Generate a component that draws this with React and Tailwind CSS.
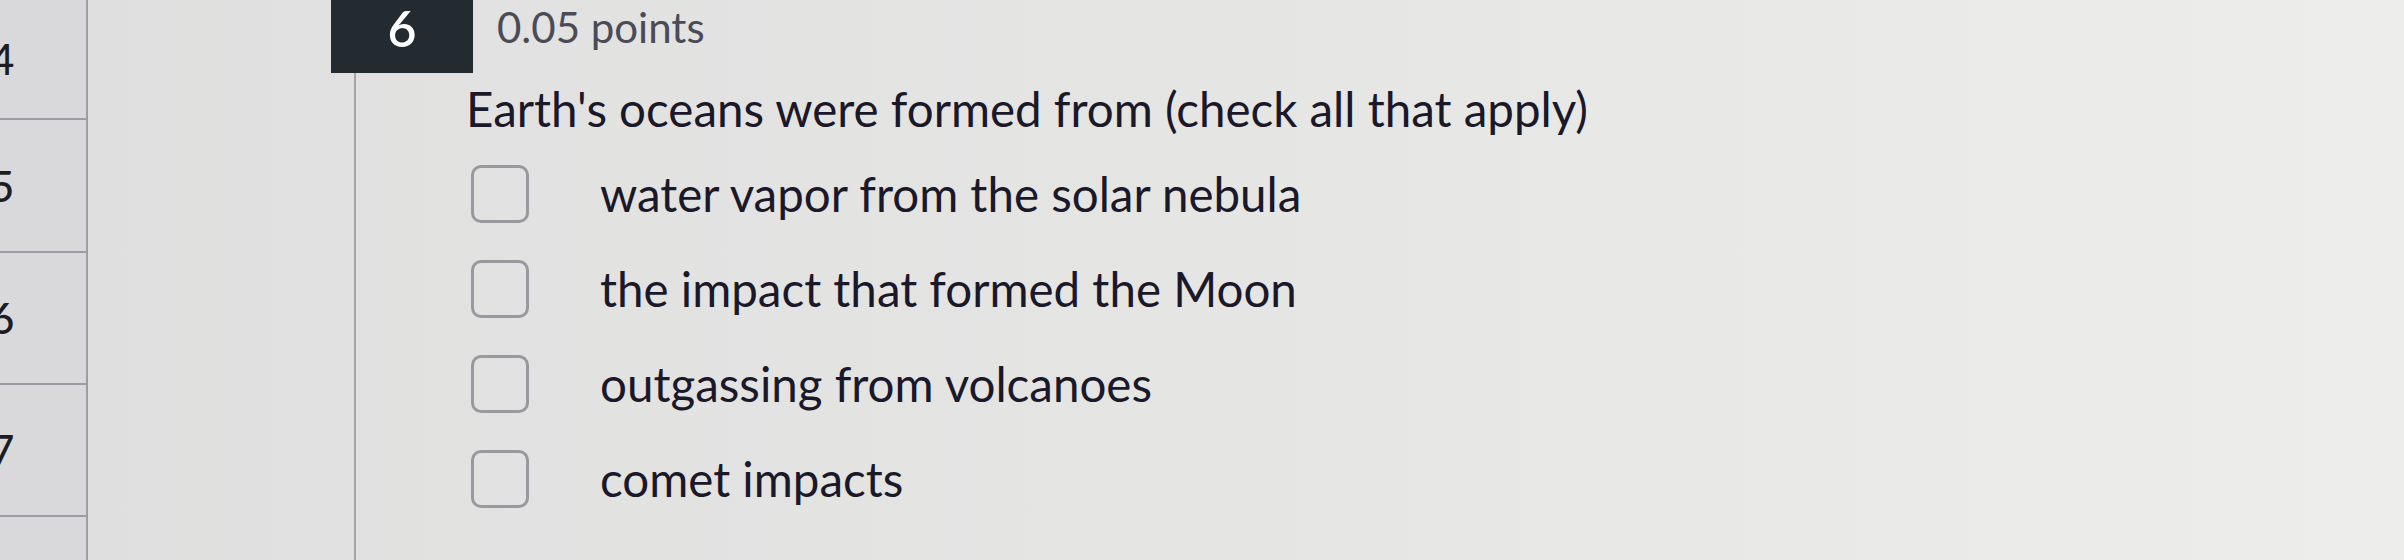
import React from "react";

const navRows = [
  { n: "4", h: "h-[120px]" },
  { n: "5", h: "h-[133px]" },
  { n: "6", h: "h-[132px]" },
  { n: "7", h: "h-[132px]" },
];

const options = [
  "water vapor from the solar nebula",
  "the impact that formed the Moon",
  "outgassing from volcanoes",
  "comet impacts",
];

function Checkbox() {
  return (
    <span className="block h-[58px] w-[58px] shrink-0 rounded-[10px] border-[3px] border-[#98989e]" />
  );
}

export default function App() {
  return (
    <div className="flex h-[560px] w-[2404px] overflow-hidden bg-linear-to-r from-[#dfdfdf] via-[#e5e5e4] to-[#ededeb] font-['Lato','Noto_Sans',sans-serif]">
      {/* question navigator, mostly off screen */}
      <aside className="flex w-[88px] shrink-0 flex-col border-r-2 border-[#9c9ca5] bg-[#d9d9db]">
        {navRows.map((row) => (
          <div
            key={row.n}
            className={`flex ${row.h} items-center overflow-hidden border-b-2 border-[#9c9ca5]`}
          >
            <span className="-ml-[10px] text-[42px] font-medium leading-none text-[#1c1c22]">
              {row.n}
            </span>
          </div>
        ))}
        <div className="flex-1" />
      </aside>

      <div className="w-[243px] shrink-0" />

      <main className="flex flex-1 flex-col">
        <header className="flex h-[73px] items-start">
          <div className="flex h-[73px] w-[142px] justify-center bg-[#232b31] pt-[3px]">
            <span className="text-[50px] font-semibold leading-[50px] text-white">6</span>
          </div>
          <span className="ml-[24px] mt-[6px] text-[42px] leading-[42px] text-[#4b4a57]">
            0.05 points
          </span>
        </header>

        <section className="ml-[23px] flex flex-1 flex-col border-l-2 border-[#a3a3a8] pl-[110px]">
          <p className="mt-[9px] text-[47.5px] leading-[54px] text-[#1b1829]">
            Earth's oceans were formed from (check all that apply)
          </p>
          <ul className="mt-[10px] flex flex-col">
            {options.map((opt) => (
              <li key={opt} className="flex h-[95px] items-center">
                <span className="ml-[5px]">
                  <Checkbox />
                </span>
                <span className="ml-[71px] text-[47.5px] leading-[54px] text-[#1b1829]">
                  {opt}
                </span>
              </li>
            ))}
          </ul>
        </section>
      </main>
    </div>
  );
}
